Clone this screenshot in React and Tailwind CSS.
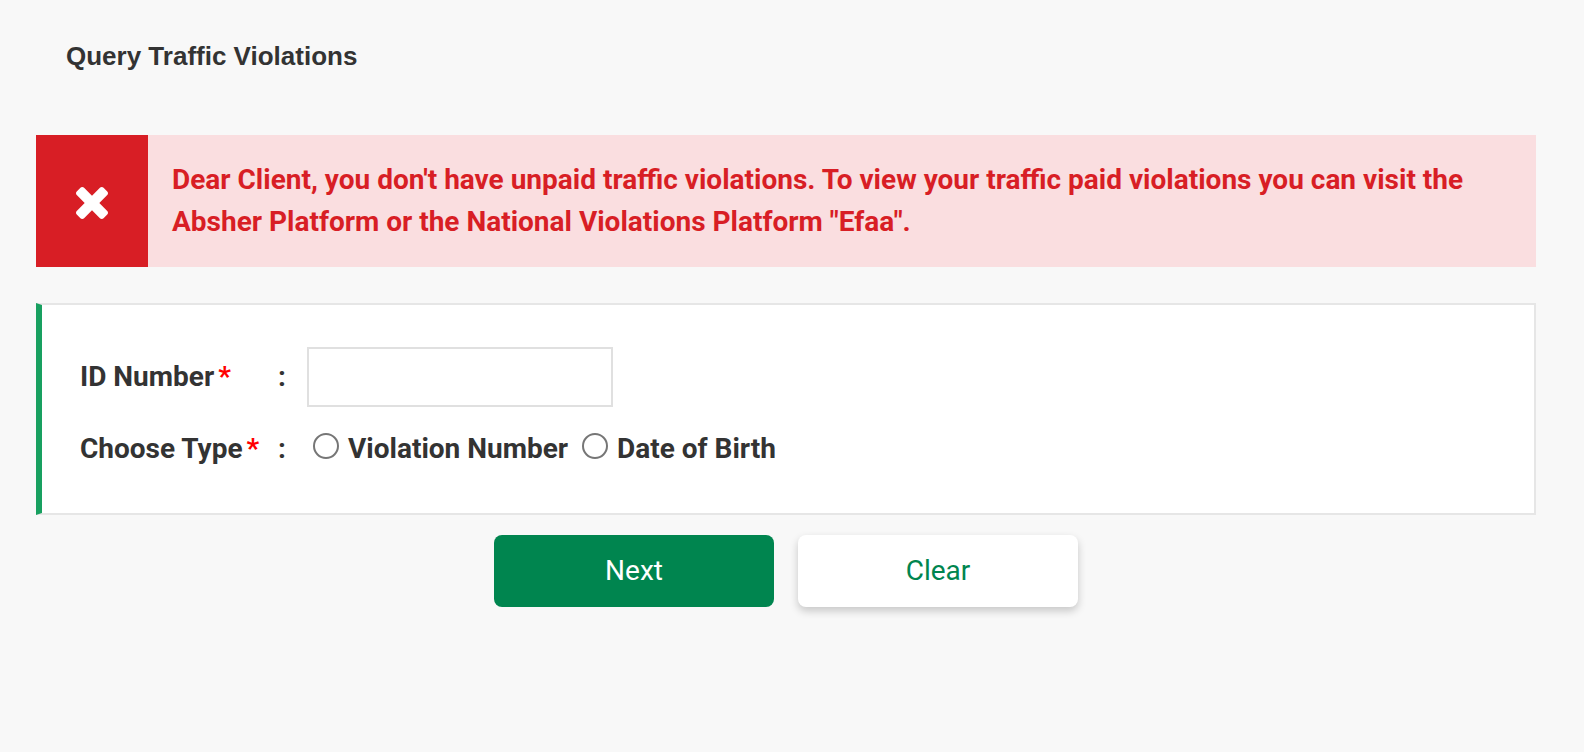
import React from "react";

function CrossIcon() {
  return (
    <svg viewBox="110 366 1188 1188" className="size-8 fill-white" aria-hidden="true">
      <path d="M1298 1322q0 40-28 68l-136 136q-28 28-68 28t-68-28l-294-294-294 294q-28 28-68 28t-68-28l-136-136q-28-28-28-68t28-68l294-294-294-294q-28-28-28-68t28-68l136-136q28-28 68-28t68 28l294 294 294-294q28-28 68-28t68 28l136 136q28 28 28 68t-28 68l-294 294 294 294q28 28 28 68z" />
    </svg>
  );
}

function Required() {
  return <span className="ml-1 text-[#ff0000]">*</span>;
}

function RadioOption({ id, label }) {
  return (
    <label htmlFor={id} className="flex items-start gap-[9px]">
      <input
        id={id}
        type="radio"
        name="queryType"
        className="mt-[5px] size-[26px] shrink-0 appearance-none rounded-full border-2 border-[#767676] bg-white checked:border-8 checked:border-[#00854f]"
      />
      {label}
    </label>
  );
}

export default function App() {
  return (
    <div className="min-h-screen bg-[#f8f8f8] pt-9 pr-12 pb-12 pl-9 font-['Roboto',sans-serif] text-[28px] leading-[42px] text-[#333333]">
      <h1 className="pl-[30px] font-['Liberation_Sans',Arial,sans-serif] text-[26px] leading-[40px] font-bold">
        Query Traffic Violations
      </h1>

      <div role="alert" className="mt-[59px] flex bg-[#fadee0] font-bold text-[#d81e25]">
        <div className="flex w-28 shrink-0 items-center justify-center bg-[#d81e25] pt-1">
          <CrossIcon />
        </div>
        <p className="p-6">
          Dear Client, you don't have unpaid traffic violations. To view your traffic paid
          violations you can visit the Absher Platform or the National Violations Platform
          "Efaa".
        </p>
      </div>

      <form onSubmit={(e) => e.preventDefault()}>
        <div className="mt-9 grid grid-cols-[198px_29px_1fr] items-center gap-y-[21px] border-2 border-l-[6px] border-[#e6e6e6] border-l-[#18a060] bg-white pt-[42px] pb-[43px] pl-[38px] font-bold">
          <label htmlFor="idNumber">
            ID Number
            <Required />
          </label>
          <span>:</span>
          <input
            id="idNumber"
            type="text"
            className="h-[60px] w-full max-w-[306px] border-2 border-[#e0e0e0] bg-white px-4 font-normal"
          />
          <span id="typeLabel">
            Choose Type
            <Required />
          </span>
          <span>:</span>
          <div role="radiogroup" aria-labelledby="typeLabel" className="flex flex-wrap gap-x-3.5 pl-1.5">
            <RadioOption id="violationNumber" label="Violation Number" />
            <RadioOption id="birthDate" label="Date of Birth" />
          </div>
        </div>

        <div className="mt-5 flex justify-center gap-6">
          <button type="submit" className="h-[72px] w-[280px] rounded-lg bg-[#00854f] text-white">
            Next
          </button>
          <button
            type="reset"
            className="h-[72px] w-[280px] rounded-lg bg-white text-[#00854f] shadow-[0_4px_8px_rgba(0,0,0,0.2)]"
          >
            Clear
          </button>
        </div>
      </form>
    </div>
  );
}
